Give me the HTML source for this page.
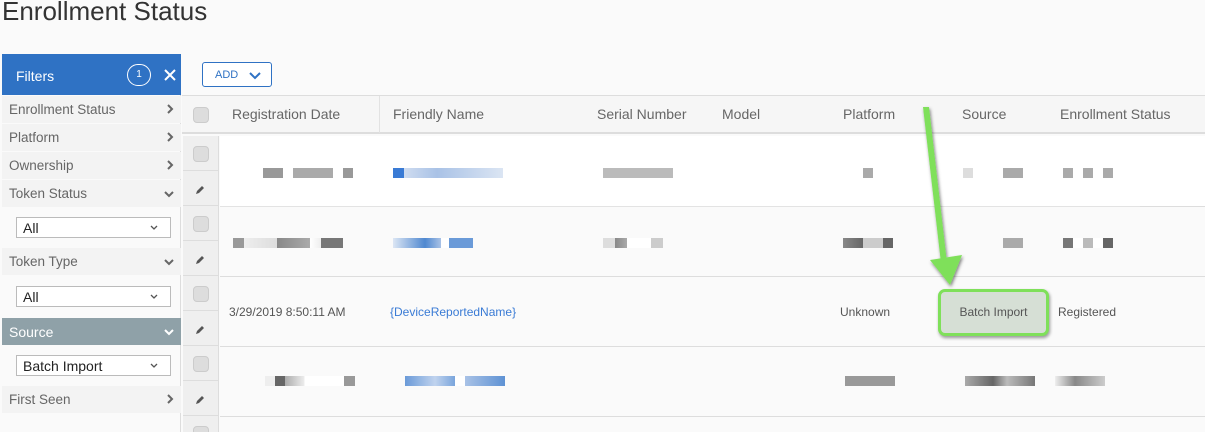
<!DOCTYPE html>
<html><head><meta charset="utf-8"><style>
*{margin:0;padding:0;box-sizing:border-box}
html,body{width:1205px;height:432px;overflow:hidden}
body{background:#fafafa;font-family:"Liberation Sans",sans-serif;position:relative;color:#555}
.a{position:absolute}
.t{font-size:26px;color:#333;left:2px;top:-4px;font-weight:300}
.side{left:0;top:54px;width:181px;height:378px;background:#fafafa;border-right:1px solid #ddd}
.fh{left:2px;top:54px;width:179px;height:41px;background:#2f72c4;color:#fff;font-size:14px}
.item{left:2px;width:179px;height:27px;background:#f3f3f3;font-size:13.5px;color:#666;padding:6px 0 0 7px}
.item svg{position:absolute;right:7px;top:8px}
.sel{left:16px;width:155px;height:21px;background:#fff;border:1px solid #bbb;font-size:14px;color:#222;padding:2px 0 0 6px}
.sel svg{position:absolute;right:12px;top:7px}
.hd{font-size:14px;color:#666;top:106px}
.cb{width:16px;height:16px;border-radius:4px;background:#ddd;border:1px solid #ccc}
.cell{left:183px;width:36px;background:#efefef;border-bottom:1px solid #ddd;border-right:1px solid #ddd}
.hl{height:1px;background:#ddd}
.b{position:absolute;height:10px}
.pen{left:194px}
</style></head><body>
<div class="a t">Enrollment Status</div>
<div class="a side"></div>
<div class="a fh"><span class="a" style="left:14px;top:14px">Filters</span>
<span class="a" style="left:125px;top:10px;width:24px;height:22px;border:1.5px solid #fff;border-radius:12px;font-size:10px;text-align:center;line-height:19px">1</span>
<svg class="a" style="left:162px;top:15px" width="12" height="12"><path d="M1 1L11 11M11 1L1 11" stroke="#fff" stroke-width="2"/></svg></div>
<div class="a item" style="top:96px">Enrollment Status<svg width="8" height="10"><path d="M2 1L6 5L2 9" fill="none" stroke="#666" stroke-width="2"/></svg></div>
<div class="a item" style="top:124px">Platform<svg width="8" height="10"><path d="M2 1L6 5L2 9" fill="none" stroke="#666" stroke-width="2"/></svg></div>
<div class="a item" style="top:152px">Ownership<svg width="8" height="10"><path d="M2 1L6 5L2 9" fill="none" stroke="#666" stroke-width="2"/></svg></div>
<div class="a item" style="top:180px">Token Status<svg width="10" height="8" style="top:10px"><path d="M1 2L5 6L9 2" fill="none" stroke="#666" stroke-width="2"/></svg></div>
<div class="a sel" style="top:217px">All<svg width="8" height="6"><path d="M1 1L4 4L7 1" fill="none" stroke="#555" stroke-width="1.3"/></svg></div>
<div class="a item" style="top:248px">Token Type<svg width="10" height="8" style="top:10px"><path d="M1 2L5 6L9 2" fill="none" stroke="#666" stroke-width="2"/></svg></div>
<div class="a sel" style="top:286px">All<svg width="8" height="6"><path d="M1 1L4 4L7 1" fill="none" stroke="#555" stroke-width="1.3"/></svg></div>
<div class="a item" style="top:318px;background:#8fa1a8;color:#fff;font-size:14px">Source<svg width="10" height="8" style="top:10px"><path d="M1 2L5 6L9 2" fill="none" stroke="#fff" stroke-width="2"/></svg></div>
<div class="a sel" style="top:355px">Batch Import<svg width="8" height="6"><path d="M1 1L4 4L7 1" fill="none" stroke="#555" stroke-width="1.3"/></svg></div>
<div class="a item" style="top:386px">First Seen<svg width="8" height="10"><path d="M2 1L6 5L2 9" fill="none" stroke="#666" stroke-width="2"/></svg></div>

<div class="a" style="left:202px;top:62px;width:70px;height:25px;border:1px solid #2f72c4;border-radius:3px;background:#fff;color:#2f72c4;font-size:11px;padding:6px 0 0 12px">ADD<svg class="a" style="left:46px;top:9px" width="12" height="8"><path d="M1 1L6 6L11 1" fill="none" stroke="#2f72c4" stroke-width="2"/></svg></div>

<div class="a" style="left:182px;top:95px;width:1023px;height:39px;background:#f6f6f6;border-top:1px solid #ddd;border-bottom:2px solid #ddd"></div>
<div class="a" style="left:379px;top:96px;width:1px;height:37px;background:#e2e2e2"></div>
<div class="a cb" style="left:193px;top:107px"></div>
<div class="a hd" style="left:232px">Registration Date</div>
<div class="a hd" style="left:393px">Friendly Name</div>
<div class="a hd" style="left:597px">Serial Number</div>
<div class="a hd" style="left:722px">Model</div>
<div class="a hd" style="left:843px">Platform</div>
<div class="a hd" style="left:962px">Source</div>
<div class="a hd" style="left:1060px">Enrollment Status</div>

<div class="a" style="left:220px;top:136px;width:985px;height:70px;background:#fff"></div>
<div class="a hl" style="left:220px;top:206px;width:920px;background:#e3e3e3"></div>
<div class="a hl" style="left:1140px;top:206px;width:65px"></div>
<div class="a hl" style="left:220px;top:276px;width:985px"></div>
<div class="a hl" style="left:220px;top:346px;width:985px"></div>
<div class="a hl" style="left:220px;top:416px;width:985px"></div>

<div class="a cell" style="top:136px;height:35px"></div><div class="a cell" style="top:171px;height:35px"></div>
<div class="a cell" style="top:206px;height:35px"></div><div class="a cell" style="top:241px;height:35px"></div>
<div class="a cell" style="top:276px;height:35px"></div><div class="a cell" style="top:311px;height:35px"></div>
<div class="a cell" style="top:346px;height:35px"></div><div class="a cell" style="top:381px;height:35px"></div>
<div class="a cell" style="top:416px;height:35px"></div>
<div class="a cb" style="left:193px;top:146px"></div>
<div class="a cb" style="left:193px;top:216px"></div>
<div class="a cb" style="left:193px;top:286px"></div>
<div class="a cb" style="left:193px;top:356px"></div>
<div class="a cb" style="left:193px;top:426px"></div>
<svg class="a" style="left:194px;top:184px" width="12" height="12"><path d="M2 10L3 7L8 2L10 4L5 9Z" fill="#555"/></svg>
<svg class="a" style="left:194px;top:254px" width="12" height="12"><path d="M2 10L3 7L8 2L10 4L5 9Z" fill="#555"/></svg>
<svg class="a" style="left:194px;top:324px" width="12" height="12"><path d="M2 10L3 7L8 2L10 4L5 9Z" fill="#555"/></svg>
<svg class="a" style="left:194px;top:394px" width="12" height="12"><path d="M2 10L3 7L8 2L10 4L5 9Z" fill="#555"/></svg>

<div class="b" style="left:263px;top:168px;width:20px;background:#999"></div>
<div class="b" style="left:293px;top:168px;width:40px;background:#aaa"></div>
<div class="b" style="left:343px;top:168px;width:10px;background:#999"></div>
<div class="b" style="left:393px;top:168px;width:110px;background:linear-gradient(90deg,#3a7bd5 10%,#cfdcf0 10%,#a9c2e6 40%,#dbe5f3)"></div>
<div class="b" style="left:603px;top:168px;width:70px;background:#bbb"></div>
<div class="b" style="left:863px;top:168px;width:10px;background:#aaa"></div>
<div class="b" style="left:963px;top:168px;width:10px;background:#ddd"></div>
<div class="b" style="left:1003px;top:168px;width:20px;background:#aaa"></div>
<div class="b" style="left:1063px;top:168px;width:50px;background:linear-gradient(90deg,#aaa 20%,#fff 20%,#fff 40%,#aaa 40%,#aaa 60%,#fff 60%,#fff 80%,#aaa 80%)"></div>
<div class="b" style="left:233px;top:238px;width:110px;background:linear-gradient(90deg,#999 10%,#eee 10%,#ddd 40%,#888 40%,#aaa 70%,#fff 70%,#eee 80%,#777 80%)"></div>
<div class="b" style="left:393px;top:238px;width:80px;background:linear-gradient(90deg,#dce6f4,#4f88d0 40%,#a9c2e6 60%,#fff 60%,#fff 70%,#6a9ad8 70%)"></div>
<div class="b" style="left:603px;top:238px;width:60px;background:linear-gradient(90deg,#ddd 20%,#888 20%,#aaa 40%,#fff 40%,#fff 80%,#ccc 80%)"></div>
<div class="b" style="left:843px;top:238px;width:50px;background:linear-gradient(90deg,#888,#666 40%,#ccc 40%,#ccc 80%,#666 80%)"></div>
<div class="b" style="left:1003px;top:238px;width:20px;background:#aaa"></div>
<div class="b" style="left:1063px;top:238px;width:50px;background:linear-gradient(90deg,#777 20%,#fff 20%,#fff 40%,#bbb 40%,#bbb 60%,#fff 60%,#fff 80%,#666 80%)"></div>
<div class="a" style="left:229px;top:305px;font-size:12px;color:#555">3/29/2019 8:50:11 AM</div>
<div class="a" style="left:390px;top:305px;font-size:12px;color:#3a7bd5">{DeviceReportedName}</div>
<div class="a" style="left:840px;top:305px;font-size:12px;color:#555">Unknown</div>
<div class="a" style="left:1058px;top:305px;font-size:12px;color:#555">Registered</div>
<div class="a" style="left:938px;top:289px;width:111px;height:47px;border:3px solid #7fe05a;border-radius:7px;background:#d6dfd5;box-shadow:1px 2px 3px rgba(0,0,0,.4);font-size:12px;color:#555;padding-top:13px;text-align:center">Batch Import</div>
<div class="b" style="left:265px;top:376px;width:90px;background:linear-gradient(90deg,#eee 11%,#666 11%,#666 22%,#aaa 22%,#eee 44%,#fff 44%,#fff 88%,#999 88%)"></div>
<div class="b" style="left:405px;top:376px;width:100px;background:linear-gradient(90deg,#6a9ad8,#c0d3ee 30%,#7aa5dc 50%,#fff 50%,#fff 60%,#a9c2e6 60%,#5e92d4)"></div>
<div class="b" style="left:845px;top:376px;width:50px;background:#999"></div>
<div class="b" style="left:965px;top:376px;width:70px;background:linear-gradient(90deg,#aaa,#666 40%,#bbb 60%,#777)"></div>
<div class="b" style="left:1055px;top:376px;width:50px;background:linear-gradient(90deg,#eee,#888 40%,#ccc)"></div>

<svg class="a" style="left:900px;top:95px" width="80" height="200" viewBox="0 0 80 200">
<defs><filter id="s"><feDropShadow dx="1" dy="2" stdDeviation="1.5" flood-opacity=".5"/></filter></defs>
<g filter="url(#s)" fill="#7fe05a">
<polygon points="23,12 29,12 47,168 41,168"/>
<polygon points="30,165 62,160 50,190"/>
</g></svg>
</body></html>
